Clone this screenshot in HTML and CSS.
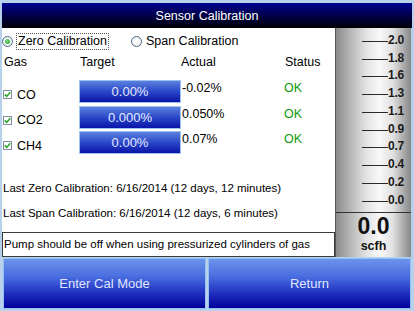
FILE: index.html
```html
<!DOCTYPE html>
<html>
<head>
<meta charset="utf-8">
<link rel="stylesheet" href="styles.css">
</head>
<body>
<div class="app">
  <div class="topstrip"></div>
  <div class="title">Sensor Calibration</div>
  <div class="main">
    <div class="content">
      <div class="modes">
        <span class="radio on"><span class="dot"></span></span>
        <span class="mode-label focus">Zero Calibration</span>
        <span class="radio second"></span>
        <span class="mode-label">Span Calibration</span>
      </div>
      <div class="grid cols">
        <span class="c-gas">Gas</span>
        <span class="c-target">Target</span>
        <span class="c-actual">Actual</span>
        <span class="c-status">Status</span>
      </div>
      <div class="grid row">
        <span class="c-gas gas"><span class="check"><svg viewBox="0 0 9 9" width="9" height="9"><path d="M1.8 4.4 L3.7 6.4 L7.3 2.2" fill="none" stroke="#2aa52a" stroke-width="1.6"/></svg></span>CO</span>
        <span class="c-target"><span class="vbtn">0.00%</span></span>
        <span class="c-actual val">-0.02%</span>
        <span class="c-status ok">OK</span>
      </div>
      <div class="grid row">
        <span class="c-gas gas"><span class="check"><svg viewBox="0 0 9 9" width="9" height="9"><path d="M1.8 4.4 L3.7 6.4 L7.3 2.2" fill="none" stroke="#2aa52a" stroke-width="1.6"/></svg></span>CO2</span>
        <span class="c-target"><span class="vbtn">0.000%</span></span>
        <span class="c-actual val">0.050%</span>
        <span class="c-status ok">OK</span>
      </div>
      <div class="grid row">
        <span class="c-gas gas"><span class="check"><svg viewBox="0 0 9 9" width="9" height="9"><path d="M1.8 4.4 L3.7 6.4 L7.3 2.2" fill="none" stroke="#2aa52a" stroke-width="1.6"/></svg></span>CH4</span>
        <span class="c-target"><span class="vbtn">0.00%</span></span>
        <span class="c-actual val">0.07%</span>
        <span class="c-status ok">OK</span>
      </div>
      <div class="info">
        <div class="info-line">Last Zero Calibration: 6/16/2014 (12 days, 12 minutes)</div>
        <div class="info-line">Last Span Calibration: 6/16/2014 (12 days, 6 minutes)</div>
        <div class="notice">Pump should be off when using pressurized cylinders of gas</div>
      </div>
    </div>
    <div class="gauge">
      <div class="ticks">
        <div class="tick"><span class="line"></span><span class="lbl">2.0</span></div>
        <div class="tick"><span class="line"></span><span class="lbl">1.8</span></div>
        <div class="tick"><span class="line"></span><span class="lbl">1.6</span></div>
        <div class="tick"><span class="line"></span><span class="lbl">1.3</span></div>
        <div class="tick"><span class="line"></span><span class="lbl">1.1</span></div>
        <div class="tick"><span class="line"></span><span class="lbl">0.9</span></div>
        <div class="tick"><span class="line"></span><span class="lbl">0.7</span></div>
        <div class="tick"><span class="line"></span><span class="lbl">0.4</span></div>
        <div class="tick"><span class="line"></span><span class="lbl">0.2</span></div>
        <div class="tick"><span class="line"></span><span class="lbl">0.0</span></div>
      </div>
      <div class="reading">
        <div class="big">0.0</div>
        <div class="unit">scfh</div>
      </div>
    </div>
  </div>
  <div class="actions">
    <div class="abtn">Enter Cal Mode</div>
    <div class="abtn">Return</div>
  </div>
</div>
</body>
</html>
```
FILE: styles.css
```css
* { box-sizing: border-box; }
html, body { margin: 0; padding: 0; }
body {
  width: 414px;
  height: 311px;
  overflow: hidden;
  background: #b7d0ec;
  font-family: "Liberation Sans", Arial, sans-serif;
  color: #000;
}
.app { width: 414px; height: 311px; display: flex; flex-direction: column; }
.topstrip { height: 3px; }
.title {
  height: 25px;
  margin: 0 2px 0 2px;
  background: linear-gradient(#000090, #00003a 60%, #000008);
  color: #fff;
  font-size: 12.5px;
  display: flex;
  align-items: center;
  justify-content: center;
}
.main {
  height: 229px;
  margin: 0 3px 0 2px;
  display: flex;
}
.content {
  flex: 1;
  background: #fff;
  display: flex;
  flex-direction: column;
  font-size: 12.5px;
}
.modes {
  margin-top: 5px;
  height: 17px;
  display: flex;
  align-items: center;
}
.radio {
  width: 11px;
  height: 11px;
  border-radius: 50%;
  border: 1px solid #4f6a86;
  background: radial-gradient(circle, #fff 40%, #dde4ec 100%);
  display: flex;
  align-items: center;
  justify-content: center;
}
.radio .dot {
  width: 5px;
  height: 5px;
  border-radius: 50%;
  background: radial-gradient(circle at 40% 40%, #7fe07f, #1e961e);
}
.radio.second { margin-left: 22px; }
.mode-label {
  height: 17px;
  line-height: 15px;
  padding: 0 1px;
  border: 1px dotted transparent;
  margin-left: 2px;
}
.mode-label.focus { border-color: #555; margin-left: 3px; }
.grid {
  display: grid;
  grid-template-columns: 77px 102px 103px 1fr;
}
.cols {
  margin-top: 4px;
  height: 16px;
  align-items: center;
}
.cols .c-gas { padding-left: 2px; }
.cols .c-target { padding-left: 1px; }
.cols .c-status { padding-left: 1px; }
.row { height: 25.5px; }
.cols + .row { margin-top: 10px; }
.gas {
  display: flex;
  align-items: center;
  padding-top: 4px;
  padding-left: 1px;
}
.check {
  width: 9px;
  height: 9px;
  border: 1px solid #7f8fa0;
  background: #fff;
  display: inline-flex;
  margin-right: 5px;
  position: relative;
}
.check svg { position: absolute; left: -1px; top: -1px; }
.vbtn {
  display: flex;
  align-items: center;
  justify-content: center;
  height: 23px;
  width: 102px;
  border: 1px solid #9cc2f0;
  background: linear-gradient(#5c80de, #2a48c8 50%, #0a14a8);
  color: #e4eaff;
  font-size: 13px;
}
.val { padding-top: 1px; padding-left: 1px; line-height: 14px; }
.ok { color: #0c9a0c; padding-top: 1px; line-height: 14px; }
.info { margin-top: auto; font-size: 11.5px; }
.info-line { height: 25px; line-height: 25px; padding-left: 1px; }
.notice {
  margin-top: 6px;
  height: 25px;
  border: 1px solid #3a3a3a;
  line-height: 23px;
  padding-left: 1px;
}
.gauge {
  width: 76px;
  border-left: 1px solid #555;
  background: linear-gradient(90deg, #8a8a8a 0%, #b4b4b4 18%, #e2e2e2 40%, #f8f8f8 58%, #e0e0e0 76%, #a4a4a4 92%, #868686 100%);
  display: flex;
  flex-direction: column;
}
.ticks { padding-top: 3px; }
.tick {
  height: 17.78px;
  display: flex;
  align-items: center;
  justify-content: flex-end;
  padding-right: 7px;
}
.line {
  width: 26px;
  height: 1px;
  background: #2a2a2a;
  margin-top: 3px;
}
.lbl {
  font-size: 12px;
  font-weight: bold;
  color: #1a1a1a;
  letter-spacing: -0.2px;
}
.reading {
  margin-top: 3px;
  border-top: 1px solid #333;
  flex: 1;
  display: flex;
  flex-direction: column;
  align-items: center;
}
.big { font-size: 23px; font-weight: bold; line-height: 23px; margin-top: 2px; color: #111; }
.unit { font-size: 12.5px; font-weight: bold; line-height: 15px; margin-top: 1px; color: #111; }
.actions {
  display: flex;
  gap: 2px;
  padding: 1px 3px 2px 3px;
  height: 54px;
}
.abtn {
  flex: 1;
  border: 1px solid #94c0f2;
  background: linear-gradient(#6c94ea, #4a6ee0 35%, #2030c0 70%, #00009a);
  color: #dfe6ff;
  font-size: 13px;
  display: flex;
  align-items: center;
  justify-content: center;
}
```
